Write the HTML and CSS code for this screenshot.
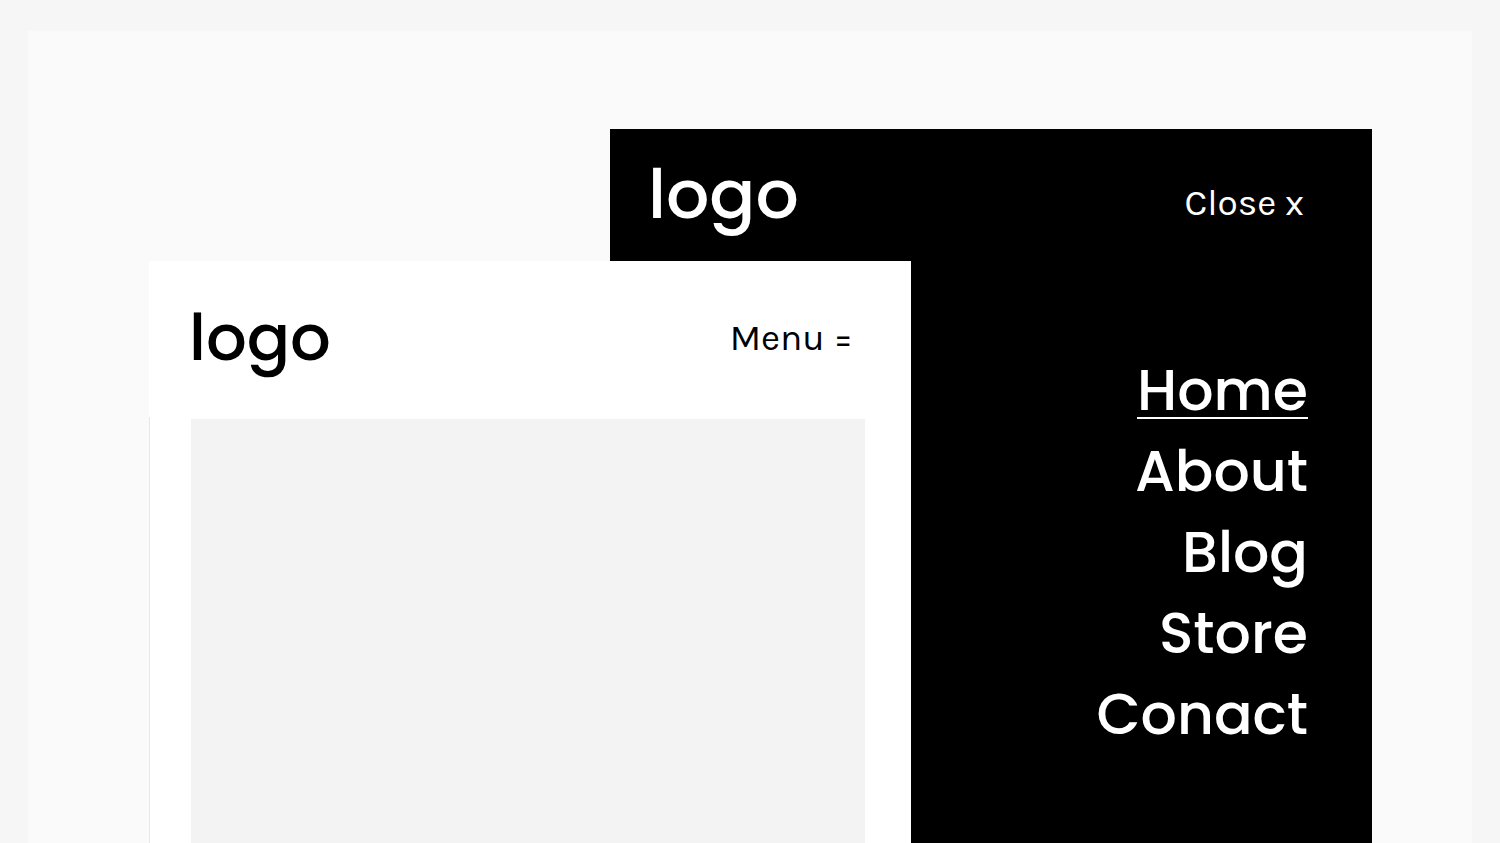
FILE: index.html
```html
<!DOCTYPE html>
<html lang="en">
<head>
  <meta charset="utf-8">
  <meta name="viewport" content="width=device-width, initial-scale=1">
  <title>Logo</title>
  <link rel="stylesheet" href="styles.css">
</head>
<body>
  <main class="stage">
    <section class="panel panel-dark">
      <header class="bar bar-dark">
        <a class="logo logo-large" href="#">logo</a>
        <button class="toggle toggle-close" type="button">Close x</button>
      </header>
      <nav class="nav" aria-label="Main">
        <a class="nav-link nav-current" href="#" aria-current="page">Home</a>
        <a class="nav-link" href="#">About</a>
        <a class="nav-link" href="#">Blog</a>
        <a class="nav-link" href="#">Store</a>
        <a class="nav-link" href="#">Conact</a>
      </nav>
    </section>
    <section class="panel panel-light">
      <header class="bar bar-light">
        <a class="logo" href="#">logo</a>
        <button class="toggle" type="button">Menu =</button>
      </header>
      <div class="body">
        <div class="content"></div>
      </div>
    </section>
  </main>
</body>
</html>
```
FILE: styles.css
```css
* {
  box-sizing: border-box;
}

body {
  margin: 0;
  height: 100vh;
  padding: 31px 28px 0;
  overflow: hidden;
  background: #f6f6f6;
  font-family: Poppins, Inter, sans-serif;
}

/* The two panels share the middle column, where the light one lies on top. */
.stage {
  display: grid;
  grid-template-columns: 461fr 301fr 461fr;
  grid-template-rows: 132px 1fr;
  height: 100%;
  padding: 98px 100px 0 121px;
  background: #fafafa;
}

.panel {
  display: flex;
  flex-direction: column;
}

.panel-dark {
  grid-column: 2 / 4;
  grid-row: 1 / 3;
  background: #000;
  color: #fff;
}

.panel-light {
  grid-column: 1 / 3;
  grid-row: 2;
  background: #fff;
  color: #000;
}

.bar {
  display: flex;
  align-items: center;
  justify-content: space-between;
}

.bar-dark {
  height: 132px;
  padding: 0 68px 0 38px;
}

.bar-light {
  height: 156px;
  padding: 0 58px 2px 40px;
}

.logo {
  color: inherit;
  font-size: 64px;
  font-weight: 500;
  line-height: 80px;
  text-decoration: none;
}

.logo-large {
  font-size: 68px;
}

.toggle {
  padding: 0;
  border: 0;
  background: none;
  color: inherit;
  font: 400 37px/40px Karla, Inter, sans-serif;
  cursor: pointer;
}

.toggle-close {
  padding-top: 16px;
}

.nav {
  display: flex;
  flex-direction: column;
  align-items: flex-end;
  gap: 24px;
  padding: 101px 64px 0 0;
}

.nav-link {
  height: 57px;
  border-bottom: 2px solid transparent;
  color: inherit;
  font-size: 57px;
  font-weight: 500;
  line-height: 56px;
  text-decoration: none;
}

.nav-current {
  border-bottom-color: #fff;
}

.body {
  display: flex;
  flex: 1;
  padding: 2px 46px 0 41px;
  border-left: 1px solid #e8e8e8;
}

.content {
  flex: 1;
  background: #f3f3f3;
}
```
